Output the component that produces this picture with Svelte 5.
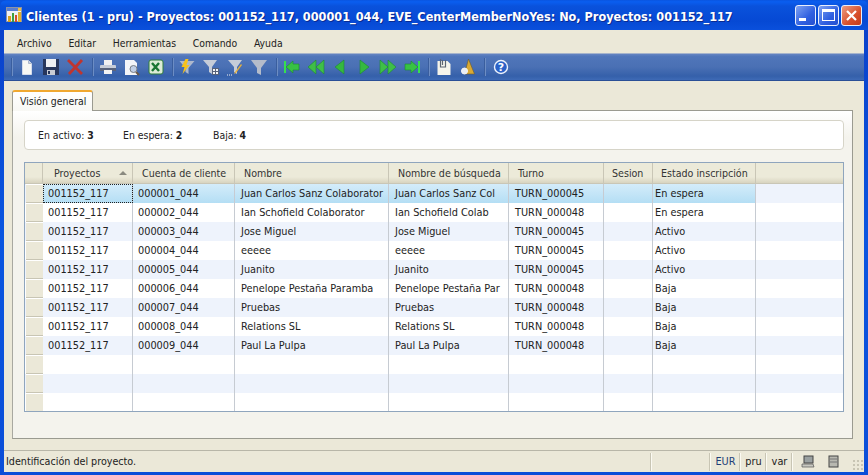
<script>
  const rows = [
    ['001152_117','000001_044','Juan Carlos Sanz Colaborator','Juan Carlos Sanz Col','TURN_000045','','En espera'],
    ['001152_117','000002_044','Ian Schofield Colaborator','Ian Schofield Colab','TURN_000048','','En espera'],
    ['001152_117','000003_044','Jose Miguel','Jose Miguel','TURN_000045','','Activo'],
    ['001152_117','000004_044','eeeee','eeeee','TURN_000045','','Activo'],
    ['001152_117','000005_044','Juanito','Juanito','TURN_000045','','Activo'],
    ['001152_117','000006_044','Penelope Pestaña Paramba','Penelope Pestaña Par','TURN_000048','','Baja'],
    ['001152_117','000007_044','Pruebas','Pruebas','TURN_000048','','Baja'],
    ['001152_117','000008_044','Relations SL','Relations SL','TURN_000048','','Baja'],
    ['001152_117','000009_044','Paul La Pulpa','Paul La Pulpa','TURN_000048','','Baja'],
    ['','','','','','',''],['','','','','','',''],['','','','','','','']
  ];
  const heads = ['Proyectos','Cuenta de cliente','Nombre','Nombre de búsqueda','Turno','Sesion','Estado inscripción'];
  const menus = ['Archivo','Editar','Herramientas','Comando','Ayuda'];
</script>

<div class="win">
  <header class="title">
    <svg class="appicon" width="16" height="16" viewBox="0 0 16 16">
      <rect x="0.500" y="0.500" width="15" height="14" fill="#eef0f4" stroke="#8a93a8"/>
      <rect x="1" y="1" width="14" height="3" fill="#5a7ed0"/>
      <rect x="12" y="1" width="3" height="3" fill="#f0c040"/>
      <rect x="2" y="9" width="3" height="6" fill="#d9a21e"/><rect x="6" y="6" width="2" height="9" fill="#3f9f3f"/><rect x="9" y="8" width="2" height="7" fill="#d4502a"/><rect x="12" y="5" width="3" height="10" fill="#e0b030"/>
    </svg>
    <span class="ttext">Clientes (1 - pru) - Proyectos: 001152_117, 000001_044, EVE_CenterMemberNoYes: No, Proyectos: 001152_117</span>
    <div class="wbtns">
      <div class="wb"><i class="min"></i></div>
      <div class="wb"><i class="max"></i></div>
      <div class="wb close"><svg width="13" height="13" viewBox="0 0 13 13"><path d="M2 2l9 9M11 2l-9 9" stroke="#fff" stroke-width="2.2"/></svg></div>
    </div>
  </header>
  <div class="inner">
    <nav class="menu">{#each menus as m}<span>{m}</span>{/each}</nav>
    <div class="tools">
      <i class="sep s0"></i>
      <svg viewBox="0 0 16 18"><path d="M3.500 2.500h6l3 3v11h-9z" fill="#f8f8f4" stroke="#d4dcec"/><path d="M9.500 2.500v3h3" fill="#c8d0de" stroke="#aab6cc"/></svg>
      <svg viewBox="0 0 18 18"><rect x="1" y="1" width="16" height="16" fill="#27365c"/><rect x="4" y="1" width="10" height="8" fill="#eef0f4"/><rect x="5" y="12" width="8" height="5" fill="#c8ccd4"/><rect x="6" y="13" width="2" height="3" fill="#27365c"/></svg>
      <svg viewBox="0 0 18 18"><path d="M2 2l14 14M16 2L3 16" stroke="#bf352f" stroke-width="2.8"/></svg>
      <i class="sep s1"></i>
      <svg viewBox="0 0 18 18"><rect x="5" y="2" width="8" height="6" fill="#f2f2f2"/><rect x="1" y="7" width="16" height="6" rx="1" fill="#c8ced8"/><rect x="1" y="10" width="16" height="3" fill="#59647c"/><rect x="5" y="12" width="8" height="4" fill="#f4f4f4"/></svg>
      <svg viewBox="0 0 16 18"><path d="M1 2h9l3 3v12H1z" fill="#f4f5f8"/><circle cx="9.500" cy="11" r="3.500" fill="#c2d0e6" stroke="#7a7f86"/><path d="M12 14l3 3" stroke="#6b5a48" stroke-width="2"/></svg>
      <svg viewBox="0 0 16 18"><rect x="1" y="2" width="14" height="14" rx="2" fill="#dcecd6" stroke="#2f7d3c"/><path d="M4 5l7 8M11 5l-7 8" stroke="#1b7733" stroke-width="2.4"/></svg>
      <i class="sep s2"></i>
      <svg viewBox="0 0 17 18"><path d="M1 3h15l-6 7v6l-3-2v-4z" fill="#aeb8cc"/><path d="M7 1L3 9h3l-2 7 7-9H8l2-6z" fill="#f6c21c"/></svg>
      <svg viewBox="0 0 18 18"><path d="M1 2h14l-5 7v7l-3-2V9z" fill="#c5ccd8"/><rect x="10.500" y="10.500" width="6" height="6" fill="#f2f4f6" stroke="#56627a"/><path d="M13.500 10v7M10 13.500h7" stroke="#56627a"/></svg>
      <svg viewBox="0 0 18 18"><path d="M2 2h14l-5 7v7l-3-2V9z" fill="#c5ccd8"/><path d="M16 7l-6 8-2 1 1-2 6-8z" fill="#e8b13c"/><path d="M1 17h1M3 17h1M5 17h1" stroke="#f2f2f2"/></svg>
      <svg viewBox="0 0 16 18"><path d="M0 2h16l-6 8v7l-4-2v-5z" fill="#b5bcca"/></svg>
      <i class="sep s3"></i>
      <svg viewBox="0 0 16 18"><rect x="0" y="3" width="2" height="12" fill="#36e04e"/><path d="M2 9l7-6v3h6v6H9v3z" fill="#38c244" stroke="#1d8a30" stroke-width=".6"/></svg>
      <svg viewBox="0 0 16 18"><path d="M0 9l8-7v14zM8 9l8-7v14z" fill="#3fbf48" stroke="#1d8a30" stroke-width=".6"/></svg>
      <svg viewBox="0 0 12 18"><path d="M1 9l9-7v14z" fill="#35b83f" stroke="#1d8a30" stroke-width=".6"/></svg>
      <svg viewBox="0 0 12 18"><path d="M11 9L2 2v14z" fill="#35b83f" stroke="#1d8a30" stroke-width=".6"/></svg>
      <svg viewBox="0 0 16 18"><path d="M16 9L8 2v14zM8 9L0 2v14z" fill="#3fbf48" stroke="#1d8a30" stroke-width=".6"/></svg>
      <svg viewBox="0 0 16 18"><rect x="14" y="3" width="2" height="12" fill="#36e04e"/><path d="M14 9L7 3v3H1v6h6v3z" fill="#38c244" stroke="#1d8a30" stroke-width=".6"/></svg>
      <i class="sep s4"></i>
      <svg viewBox="0 0 15 18"><path d="M1 3h10l3 3v11H1z" fill="#f6f4ea"/><path d="M4 1v8h5V2M6 2v5" fill="none" stroke="#5d6572" stroke-width="1.200"/></svg>
      <svg viewBox="0 0 17 18"><path d="M9 1l6 15H5z" fill="#d8a934" stroke="#6c5a2c" stroke-width=".6"/><circle cx="5" cy="13" r="3" fill="#e8edf5" stroke="#f6f6f6"/></svg>
      <i class="sep s5"></i>
      <svg viewBox="0 0 16 18"><circle cx="8" cy="9" r="6.500" fill="#2b62c8" stroke="#eef3fb" stroke-width="1.400"/><text x="8" y="13" text-anchor="middle" class="q">?</text></svg>
    </div>
    <div class="content">
      <div class="tabs"><div class="tab">Visión general</div></div>
      <section class="panel">
        <div class="summary">
          <span class="a">En activo: <b>3</b></span><span class="b">En espera: <b>2</b></span><span>Baja: <b>4</b></span>
        </div>
        <div class="grid">
          <div class="row head">
            <div class="sel"></div>
            {#each heads as h, i}
              <div class="c h h{i}">{h}{#if i === 0}<i class="arrow"></i>{/if}</div>
            {/each}
          </div>
          {#each rows as r, i}
            <div class="row" class:alt={i % 2 === 0}>
              <div class="sel"></div>
              {#each r as v, j}
                <div class="c d{j}" class:cur={i === 0} class:focus={i === 0 && j === 0}>{v}</div>
              {/each}
            </div>
          {/each}
        </div>
      </section>
    </div>
    <footer class="status">
      <span class="msg">Identificación del proyecto.</span>
      <span class="cell e0"></span>
      <span class="cell eur">EUR</span>
      <span class="cell pru">pru</span>
      <span class="cell var">var</span>
      <span class="cell ico"><svg width="14" height="13" viewBox="0 0 14 13"><rect x="3" y="1" width="9" height="7" fill="#9aa0a0" stroke="#444"/><path d="M1 9h11l1 3H1z" fill="#c8c8c0" stroke="#555" stroke-width=".7"/></svg></span>
      <span class="cell ico i2"><svg width="11" height="13" viewBox="0 0 11 13"><rect x="1" y="1" width="9" height="11" fill="#b8b8b0" stroke="#444"/><path d="M2 4h7M2 7h7" stroke="#777"/></svg></span>
      <span class="grip"></span>
    </footer>
  </div>
</div>

<style>
  :global(body) { margin: 0; background: #0a50d8; }
  * { box-sizing: border-box; }
  .win { width: 868px; height: 475px; display: flex; flex-direction: column; font: 10.85px "DejaVu Sans Condensed", "DejaVu Sans", sans-serif; color: #222; background: linear-gradient(#0a3fc8, #0b56e0 50%, #0b4ed8); overflow: hidden; border-radius: 6px 6px 0 0; }
  .title { height: 30px; flex: none; display: flex; align-items: center; padding: 0 6px 0 6px; background: linear-gradient(#0a55e0, #0a5ef0 6%, #0a52dc 20%, #0649d4 70%, #0a50dc 100%); }
  .appicon { flex: none; }
  .ttext { margin-left: 4px; padding-top: 3px; font: bold 12.57px "DejaVu Sans Condensed", sans-serif; color: #fff; white-space: nowrap; flex: 1; text-shadow: 1px 1px 0 #0a2a90; }
  .wbtns { display: flex; gap: 2px; }
  .wb { width: 21px; height: 21px; border: 1px solid #e8eefc; border-radius: 3px; background: linear-gradient(135deg, #7ea2f2, #2f5fe0 60%, #2450d0); display: flex; align-items: center; justify-content: center; }
  .wb.close { background: linear-gradient(135deg, #ec9c82, #d8502c 60%, #c43c1c); }
  .min { width: 7px; height: 3px; background: #fff; margin-top: 9px; margin-right: 6px; }
  .max { width: 13px; height: 12px; border: 1px solid #fff; border-top-width: 3px; }
  .inner { flex: 1; margin: 0 4px 3px 4px; background: #ebe8d8; display: flex; flex-direction: column; min-height: 0; }
  .menu { height: 23px; flex: none; display: flex; gap: 16.7px; padding: 2px 13px 0; align-items: center; color: #222; font-size: 10.35px; }
  .tools { height: 28px; flex: none; display: flex; align-items: center; background: linear-gradient(#6484c2 0, #5076ba 10%, #4a70b4 50%, #3560aa 85%, #3e6ab6 100%); border-top: 1px solid #a6b4cc; border-bottom: 1px solid #2a4f96; }
  .tools svg { width: 24px; height: 18px; flex: none; }
  .tools .sep { width: 1px; height: 18px; background: #6c8dc4; box-shadow: -1px 0 0 #3a5e9e; flex: none; }
  .s0 { margin: 0 2px 0 8px; }
  .s1 { margin: 0 2px 0 6px; }
  .s2 { margin: 0 1px 0 5px; }
  .s3 { margin: 0 2px 0 6px; }
  .s4 { margin: 0 2px 0 5px; }
  .s5 { margin: 0 3px 0 5px; }
  .q { font: bold 11px "DejaVu Sans", sans-serif; fill: #fff; }
  .content { flex: 1; min-height: 0; padding: 9px 11px 11px 8px; display: flex; flex-direction: column; }
  .tabs { height: 20px; flex: none; display: flex; }
  .tab { width: 81px; height: 21px; padding: 3px 0 0 7px; border: 1px solid #9a9a90; border-bottom: 0; border-top: 2px solid #f0a830; border-radius: 3px 3px 0 0; background: linear-gradient(#fff, #f8f8f4); position: relative; z-index: 1; margin-bottom: -1px; font-size: 10.4px; }
  .panel { flex: 1; min-height: 0; border: 1px solid #9a9a90; border-left-color: #a8a8a0; padding: 9px 0 0 11px; display: flex; flex-direction: column; background: linear-gradient(#fff, #f4f3ed 8%); }
  .summary { width: 820px; height: 30px; flex: none; display: flex; align-items: center; padding-left: 13px; background: #fff; border: 1px solid #d6d4c8; border-radius: 4px; font-size: 10.4px; }
  .a { width: 85px; } .b { width: 90px; }
  .grid { margin-top: 12px; width: 820px; height: 250px; border: 1px solid #8fa5bd; background: #fff; overflow: hidden; }
  .row { display: grid; grid-template-columns: 18px 90px 102px 154px 120px 95px 49px 103px; height: 19px; }
  .row.head { height: 21px; background: linear-gradient(#ecead9 70%, #d8d4c0); border-bottom: 1px solid #c9c6b6; }
  .sel { background: #ebe8d8; border-top: 1px solid #fff; border-bottom: 1px solid #c8c5b4; margin-left: 1px; }
  .head .sel { border: 0; background: transparent; border-right: 1px solid #c9c6b6; }
  .c { line-height: 19px; padding-left: 5px; border-right: 1px solid #c6cbd2; white-space: nowrap; overflow: hidden; }
  .d2, .d3 { padding-left: 6px; }
  .d4 { padding-left: 6px; }
  .d6 { padding-left: 2px; }
  .h { color: #333; padding-left: 11px; position: relative; border-right: 1px solid #c9c6b6; line-height: 20px; font-size: 10.6px; }
  .h1 { padding-left: 9px; }
  .h2, .h3, .h4 { padding-left: 9px; }
  .h5 { padding-left: 8px; }
  .h6 { padding-left: 8px; }
  .arrow { position: absolute; left: 76px; top: 8px; width: 0; height: 0; border: 4px solid transparent; border-top: 0; border-bottom: 4px solid #8a8a80; }
  .alt { background: #eef3fc; }
  .cur { background: linear-gradient(#d4ecfa, #b4def4); }
  .focus { outline: 1px dotted #222; outline-offset: -1px; }
  .status { height: 22px; flex: none; display: flex; align-items: center; background: #ebe8d8; border-top: 1px solid #b8b6a8; }
  .msg { margin-left: 2px; width: 645px; color: #222; font-size: 10.67px; }
  .cell { height: 18px; display: flex; align-items: center; justify-content: center; border-left: 1px solid #fbfaf2; box-shadow: -1px 0 0 #c8c5b4; }
  .e0 { width: 59px; }
  .eur { width: 30px; color: #1f3f78; }
  .pru { width: 26px; } .var { width: 26px; }
  .ico { width: 30px; }
  .i2 { width: 22px; border: 0; box-shadow: none; }
  .grip { width: 12px; height: 12px; margin: 6px 0 0 8px; background: radial-gradient(circle, #c8c5b4 1px, transparent 1.2px) 0 0/4px 4px; }
</style>
